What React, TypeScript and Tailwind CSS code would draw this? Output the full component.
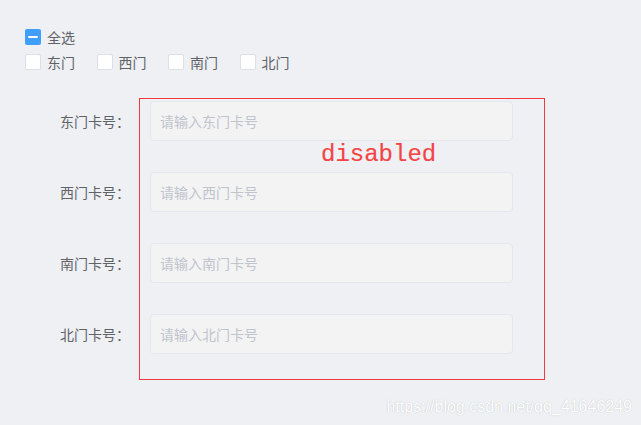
import { useState } from "react";

const gates = ["东门", "西门", "南门", "北门"];

function Box({ checked, indeterminate }: { checked?: boolean; indeterminate?: boolean }) {
  if (indeterminate || checked) {
    return (
      <span className="w-[16px] h-[16px] rounded-[2px] bg-[#409eff] flex items-center justify-center shrink-0">
        <span className="w-[10px] h-[2px] bg-white rounded-[1px]" />
      </span>
    );
  }
  return <span className="w-[16px] h-[16px] rounded-[2px] bg-white border border-[#dcdfe6] shrink-0" />;
}

export default function App() {
  const [picked] = useState<string[]>([]);

  return (
    <div
      className="relative w-[641px] h-[425px] bg-[#eef0f4] overflow-hidden text-[14px] text-[#606266]"
      style={{ fontFamily: '"Noto Sans CJK SC", "Noto Sans", sans-serif' }}
    >
      {/* checkbox group */}
      <div className="pl-[25px] pt-[28px]">
        <label className="flex items-center gap-[6px] h-[17px]">
          <Box indeterminate />
          <span className="leading-none">全选</span>
        </label>
        <div className="flex mt-[8px] h-[18px] items-center">
          {gates.map((g) => (
            <label key={g} className="flex items-center gap-[6px] w-[71.5px]">
              <Box checked={picked.includes(g)} />
              <span className="leading-none">{g}</span>
            </label>
          ))}
        </div>
      </div>

      {/* card number form */}
      <div className="mt-[30px] flex flex-col gap-[31px]">
        {gates.map((g) => (
          <div key={g} className="flex items-center">
            <div className="w-[150px] pr-[20px] text-right leading-none">{g}卡号：</div>
            <div className="w-[363px] h-[40px] rounded-[4px] border border-[#e4e7ed] bg-[#f3f3f4] flex items-center px-[9px] text-[#c0c4cc] cursor-not-allowed">
              请输入{g}卡号
            </div>
          </div>
        ))}
      </div>

      {/* annotation */}
      <div className="absolute left-[139px] top-[98px] w-[406px] h-[282px] border border-[#f03c3c] pointer-events-none" />
      <div
        className="absolute left-[321px] top-[143px] text-[24px] leading-none text-[#f44444] [-webkit-text-stroke:0.15px_#f44444]"
        style={{ fontFamily: '"Liberation Mono", monospace' }}
      >
        disabled
      </div>

      <div
        className="absolute right-[9px] bottom-[10px] text-[16px] leading-none text-white [text-shadow:0_0_1px_rgba(0,0,0,0.25)]"
        style={{ fontFamily: '"Liberation Sans", Arial, sans-serif' }}
      >
        https://blog.csdn.net/qq_41646249
      </div>
    </div>
  );
}
